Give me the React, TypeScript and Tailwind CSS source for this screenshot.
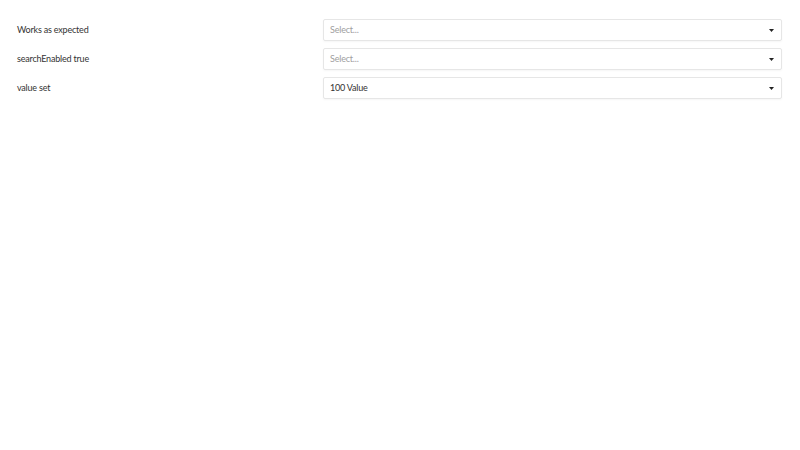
import React from "react";

function Arrow() {
  return (
    <svg width="5" height="3" viewBox="0 0 5 3" className="shrink-0">
      <path d="M0 0 L5 0 L2.5 3 Z" fill="#222" />
    </svg>
  );
}

function Row({ label, value, placeholder }: { label: string; value?: string; placeholder?: string }) {
  return (
    <div className="flex items-center h-[22px]">
      <div className="w-[40%] text-[9px] tracking-[-0.2px] text-[#333]">{label}</div>
      <div className="w-[60%] h-[22px] border border-[#e6e6e6] rounded-[2px] flex items-center pl-[6px] pr-[7px] shadow-[0_1px_2px_rgba(0,0,0,0.04)]">
        <span className={"flex-1 text-[9px] tracking-[-0.2px] " + (value ? "text-[#333]" : "text-[#a0a0a0]")}>{value ?? placeholder}</span>
        <Arrow />
      </div>
    </div>
  );
}

export default function App() {
  return (
    <div className="w-[800px] h-[450px] bg-white pl-[17px] pr-[18px] pt-[19px] flex flex-col gap-[7px]" style={{ fontFamily: 'Lato, "Open Sans", sans-serif' }}>
      <Row label="Works as expected" placeholder="Select..." />
      <Row label="searchEnabled true" placeholder="Select..." />
      <Row label="value set" value="100 Value" />
    </div>
  );
}
